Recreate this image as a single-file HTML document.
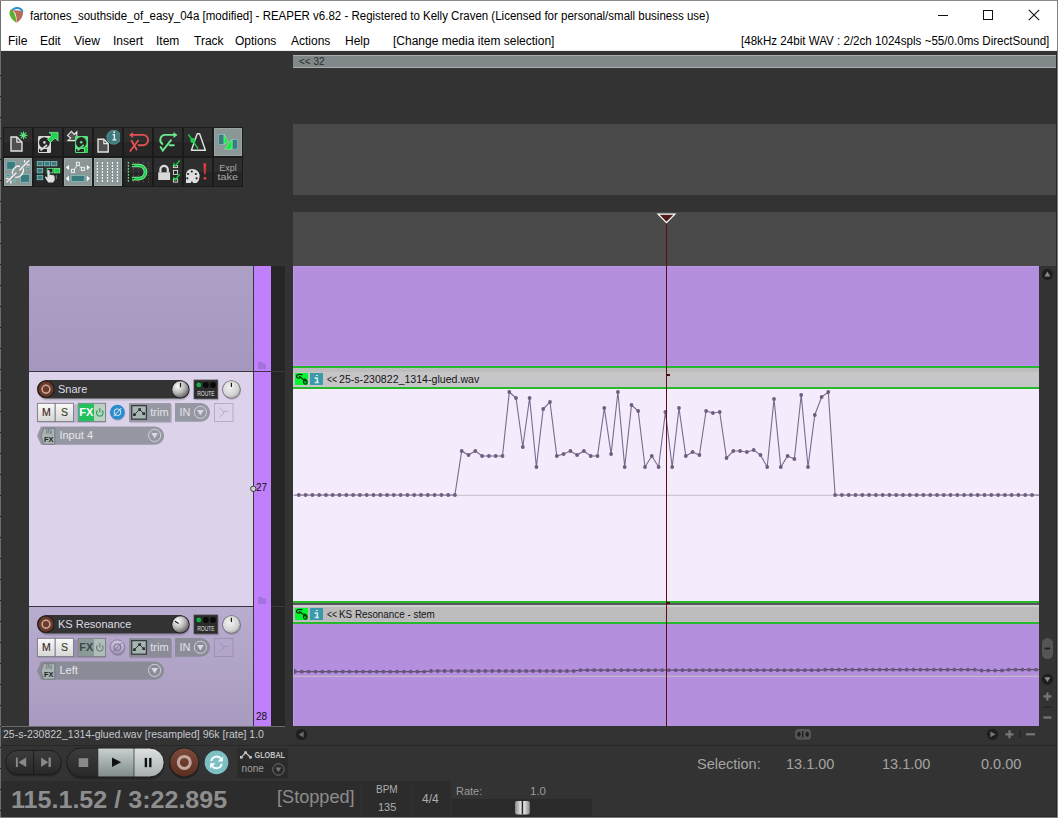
<!DOCTYPE html>
<html><head><meta charset="utf-8">
<style>
*{margin:0;padding:0;box-sizing:border-box}
html,body{width:1058px;height:818px;overflow:hidden;background:#333;font-family:"Liberation Sans",sans-serif}
.a{position:absolute}
#title{left:0;top:0;width:1058px;height:30px;background:#fff}
#menu{left:0;top:30px;width:1058px;height:21px;background:#fff;border-bottom:1px solid #ececec}
.t{position:absolute;white-space:nowrap;color:#000;font-size:12px;line-height:14px}
.mi{position:absolute;top:34px;font-size:12px;line-height:14px;color:#000;white-space:nowrap}
</style></head><body>
<!-- window borders -->
<div class="a" style="left:0;top:0;width:1px;height:818px;background:#707070;z-index:50"></div>
<div class="a" style="left:0;top:51px;width:1px;height:767px;background:repeating-linear-gradient(#6c6c6c 0,#6c6c6c 20px,#1e1e1e 20px,#1e1e1e 21px);background-position:0 4px;z-index:50"></div>
<div class="a" style="left:0;top:0;width:1058px;height:1px;background:#8a8a8a;z-index:50"></div>
<div class="a" style="left:1056px;top:51px;width:1px;height:766px;background:#2a2a2a;z-index:49"></div>
<div class="a" style="left:1057px;top:0;width:1px;height:818px;background:#808080;z-index:50"></div>
<div class="a" style="left:0;top:816px;width:1058px;height:1px;background:#2a2a2a;z-index:49"></div>
<div class="a" style="left:0;top:817px;width:1058px;height:1px;background:#808080;z-index:50"></div>

<div id="title" class="a"></div>
<div id="menu" class="a"></div>
<div class="t" style="left:30px;top:9px;transform:scaleX(0.958);transform-origin:0 0">fartones_southside_of_easy_04a [modified] - REAPER v6.82 - Registered to Kelly Craven (Licensed for personal/small business use)</div>
<svg class="a" style="left:8px;top:6px" width="18" height="18" viewBox="0 0 18 18">
<path d="M3.2 4.2 A7 7 0 0 1 15.6 5.5 L13.8 6.2 A5.4 5.4 0 0 0 4.6 5.2 Z" fill="#2a8fd0"/>
<path d="M1.6 5.8 Q2 3.6 3.6 3.6 Q6.5 5.5 8 12.5 Q8.4 15 7.6 16.6 Q3.5 14 1.6 9 Z" fill="#5cb030"/>
<path d="M4.8 4.4 Q9 3.6 14.8 5.6 Q15.6 10 12 14 Q10 16.2 8.4 16.8 Q9.2 12 7.5 7.5 Q6.5 5.2 4.8 4.4 Z" fill="#b86a58"/>
<path d="M2 4.6 L4 3.4 L4.8 4.4 L3 5.2 Z" fill="#c07a30"/>
</svg>
<!-- window controls -->
<div class="a" style="left:938px;top:15px;width:10px;height:1px;background:#111"></div>
<div class="a" style="left:983px;top:10px;width:10px;height:10px;border:1px solid #111"></div>
<svg class="a" style="left:1028px;top:9px" width="12" height="12" viewBox="0 0 12 12"><path d="M0.8 0.8 L11.2 11.2 M11.2 0.8 L0.8 11.2" stroke="#111" stroke-width="1.1"/></svg>
<div class="mi" style="left:8px">File</div>
<div class="mi" style="left:40px">Edit</div>
<div class="mi" style="left:74px">View</div>
<div class="mi" style="left:113px">Insert</div>
<div class="mi" style="left:156px">Item</div>
<div class="mi" style="left:194px">Track</div>
<div class="mi" style="left:235px">Options</div>
<div class="mi" style="left:291px">Actions</div>
<div class="mi" style="left:345px">Help</div>
<div class="mi" style="left:393px">[Change media item selection]</div>
<div class="mi" style="left:741px;transform:scaleX(0.966);transform-origin:0 0">[48kHz 24bit WAV : 2/2ch 1024spls ~55/0.0ms DirectSound]</div>

<!-- ruler -->
<div class="a" style="left:293px;top:55px;width:763px;height:13px;background:#808889;border-top:1px solid #a9adae;border-bottom:1px solid #a9adae"></div>
<div class="a" style="left:299px;top:56px;font-size:10px;line-height:11px;color:#2a2a2a">&lt;&lt; 32</div>
<!-- gray panels -->
<div class="a" style="left:293px;top:124px;width:763px;height:71px;background:#4a4a4a"></div>
<div class="a" style="left:293px;top:212px;width:763px;height:54px;background:#4a4a4a"></div>

<!-- toolbar -->
<svg class="a" style="left:3px;top:127px" width="240" height="60" viewBox="0 0 240 60">
<defs>
<linearGradient id="btn" x1="0" y1="0" x2="0" y2="1"><stop offset="0.5" stop-color="#2e2e2e"/><stop offset="0.5" stop-color="#262626"/></linearGradient>
</defs>
<rect x="0" y="0" width="240" height="60" fill="#1b1b1b"/>
<g fill="url(#btn)">
<rect x="1" y="1" width="28" height="28"/><rect x="31" y="1" width="28" height="28"/><rect x="61" y="1" width="28" height="28"/><rect x="91" y="1" width="28" height="28"/>
<rect x="121" y="1" width="28" height="28"/><rect x="151" y="1" width="28" height="28"/><rect x="181" y="1" width="28" height="28"/>
<rect x="31" y="31" width="28" height="28"/><rect x="121" y="31" width="28" height="28"/><rect x="151" y="31" width="28" height="28"/><rect x="181" y="31" width="28" height="28"/><rect x="211" y="31" width="28" height="28"/>
</g>
<g fill="#8b9797" stroke="#9aa6a6" stroke-width="1">
<rect x="211.5" y="1.5" width="27" height="27"/><rect x="1.5" y="31.5" width="27" height="27"/><rect x="61.5" y="31.5" width="27" height="27"/><rect x="91.5" y="31.5" width="27" height="27"/>
</g>
<!-- b1 new project -->
<path d="M8 10 H13.8 L19 15.2 V24 H8 Z" fill="#505050" stroke="#e2e2e2" stroke-width="1.4" stroke-linejoin="miter"/>
<path d="M13.8 10 V15.2 H19" fill="none" stroke="#e2e2e2" stroke-width="1.2"/>
<g stroke="#5ae07a" stroke-width="1.2"><path d="M20.5 4.6 V12.2 M16.7 8.4 H24.3 M17.8 5.7 L23.2 11.1 M23.2 5.7 L17.8 11.1"/></g>
<!-- b2 save -->
<rect x="35" y="9" width="13" height="17" rx="1.2" fill="#d9d9d9"/>
<circle cx="41.4" cy="15.6" r="5.4" fill="#252525"/>
<path d="M36 22 H44 V25 H36 Z" fill="#252525"/>
<circle cx="41.4" cy="15.4" r="1.3" fill="#d9d9d9"/>
<path d="M44 18 L37.5 23.5" stroke="#d9d9d9" stroke-width="1.7"/>
<path d="M46 5.4 H55 V14 L52 11 L47.5 15.5 L44.5 12.5 L49 8 Z" fill="#22d24e" stroke="#7fe89c" stroke-width="0.8"/>
<!-- b3 load -->
<path d="M64.6 8.4 L68.4 4.4 L71.2 7.4 L73.8 4.8 V13.6 H65 L67.6 11 Z" fill="#555" stroke="#e2e2e2" stroke-width="1.2" stroke-linejoin="miter"/>
<rect x="72" y="9" width="13" height="17" rx="1.2" fill="#5ee080"/>
<circle cx="78.2" cy="15.4" r="5.3" fill="#252525"/>
<path d="M73 22 H81 V25 H73 Z" fill="#252525"/>
<circle cx="78.2" cy="15.2" r="1.3" fill="#5ee080"/>
<path d="M80.8 17.8 L74.5 23.5" stroke="#5ee080" stroke-width="1.7"/>
<rect x="82" y="20" width="2.6" height="5.4" fill="#18d040"/>
<!-- b4 project info -->
<path d="M95 12.2 H100.8 L105.2 16.6 V25 H95 Z" fill="#505050" stroke="#e2e2e2" stroke-width="1.4"/>
<path d="M100.8 12.2 V16.6 H105.2" fill="none" stroke="#e2e2e2" stroke-width="1.2"/>
<clipPath id="ic4"><rect x="100" y="2.8" width="17" height="20"/></clipPath><circle cx="110.8" cy="10.2" r="7" fill="#3f7a7e" stroke="#5f9a9c" stroke-width="0.8" clip-path="url(#ic4)"/>
<path d="M109.6 7.6 H111.4 V12.8 M109.4 12.8 H113.4" stroke="#f2f2f2" stroke-width="1.3" fill="none"/>
<circle cx="111.2" cy="5.2" r="0.9" fill="#f2f2f2"/>
<!-- b5 red loop -->
<g stroke="#e05252" stroke-width="1.9" fill="none" stroke-linecap="round">
<path d="M8 7.9 H19.9 A5.2 5.2 0 0 1 19.9 18.3 H15.5" transform="translate(120 0)"/>
<path d="M127.3 24 L135 13.8 M128.6 13.8 L133.6 22.5"/>
</g>
<path d="M126 7.9 L130 4.9 V10.9 Z" fill="#e05252"/>
<!-- b6 green loop -->
<g stroke="#6ee890" stroke-width="1.9" fill="none" stroke-linecap="round">
<path d="M172 7.9 H162 A5 5 0 0 0 159.4 17"/>
<path d="M157.6 20 L159.8 23.6 L168 13.2 M166.6 18.2 H170.8"/>
</g>
<path d="M174.5 7.9 L170.5 4.9 V10.9 Z" fill="#6ee890"/>
<!-- b7 metronome -->
<path d="M194.2 6.8 H196.6 L202.4 23.3 H188.4 Z" fill="#2a2a2a" stroke="#e2e2e2" stroke-width="1.4" stroke-linejoin="round"/>
<path d="M185.4 7.4 L195 21.6" stroke="#20d04a" stroke-width="1.5"/>
<circle cx="189.9" cy="13.6" r="2.5" fill="#20d04a"/>
<!-- b8 highlighted -->
<rect x="215.5" y="7.4" width="5.6" height="9.9" fill="#3d7a7e" stroke="#7ec4c4" stroke-width="0.7"/>
<path d="M221.1 7.4 L225.4 15 L221.1 17.3 Z" fill="#10ee40" stroke="#90f0a8" stroke-width="0.6"/>
<rect x="229" y="12.5" width="5.5" height="9.6" fill="#3d7a7e" stroke="#7ec4c4" stroke-width="0.7"/>
<path d="M229 12.5 V22.1 H221.4 Z" fill="#10ee40" stroke="#90f0a8" stroke-width="0.6"/>
<!-- row 2 -->
<!-- c1 chain -->
<g fill="#3d7a7e" stroke="#7ec4c4" stroke-width="0.7">
<rect x="3.8" y="34.6" width="8.4" height="7.6"/><rect x="17.6" y="47.6" width="8.8" height="7.6"/>
<rect x="17.4" y="34.8" width="1.8" height="2.2"/><rect x="23.2" y="40.6" width="3.2" height="1.5"/>
<rect x="3.4" y="47.6" width="3.4" height="1.6"/><rect x="10.8" y="52.8" width="1.8" height="2.4"/>
</g>
<g stroke="#f2f2f2" fill="none" stroke-width="1.4" stroke-linecap="round">
<path d="M3.9 55.1 L13 45.9 M16.7 43 L25.9 33.7"/>
<path d="M9.4 46.6 Q9.2 42.6 12.6 40 Q15 38.5 16.6 39.4"/>
<path d="M20.4 42 Q20.8 46 17.6 48.8 Q15 50.8 12.8 50.3"/>
<path d="M21.6 33.6 V35 M24.2 37.9 H26.4 M3.3 51.6 H5 M7.9 54 V56"/>
</g>
<!-- c2 grid hand -->
<g fill="#3d7a7e" stroke="#7ec4c4" stroke-width="0.8">
<rect x="34.2" y="34.4" width="5.5" height="4.4"/><rect x="41.2" y="34.4" width="5.6" height="4.4"/><rect x="48.2" y="34.4" width="5.7" height="4.4"/>
<rect x="34.2" y="41.4" width="5.5" height="4.5"/><rect x="34.2" y="48.3" width="5.5" height="4.4"/>
</g>
<rect x="44.2" y="41.4" width="5.7" height="4.5" fill="#252525" stroke="#5ee080" stroke-width="0.9"/>
<rect x="51" y="41.4" width="5.7" height="4.5" fill="#18d040" stroke="#7ee89a" stroke-width="0.8"/>
<path d="M53.3 48 V52" stroke="#7ec4c4" stroke-width="0.6"/>
<path d="M45.2 55.5 L42 50.6 Q41.5 49.2 43 49.4 L44.4 50.8 V43.6 Q45.5 42.4 46.6 43.6 V48 Q48 47.3 49 48.2 Q50.6 47.8 51.4 49 L51.8 53 L50 55.5 Z" fill="#e0e0e0"/>
<!-- c3 envelope -->
<g fill="#fff">
<path d="M62.8 40.5 L66 37.9 V43 Z M86.9 40.5 L83.8 37.9 V43 Z M62.8 51.6 L66 48.7 V54.5 Z M86.9 51.6 L83.8 48.7 V54.5 Z"/>
</g>
<g stroke="#f0f0f0" fill="none" stroke-width="1">
<path d="M71.2 42.6 L74.2 38.4 M76.2 38.4 L78.6 41.2"/>
<rect x="68.4" y="42.4" width="3" height="3"/><rect x="73.4" y="35.3" width="3" height="3"/><rect x="78.4" y="40.4" width="3" height="3"/>
</g>
<rect x="68.2" y="48.4" width="13.6" height="6" fill="#3d7a7e" stroke="#7ec4c4" stroke-width="0.8"/>
<!-- c4 grid dots -->
<g stroke="#f4f4f4" stroke-width="1.2" stroke-dasharray="1.9 1.1">
<path d="M94.3 35 V55.2 M99.4 35 V55.2 M104.5 35 V55.2 M109.5 35 V55.2 M114.5 35 V55.2"/>
</g>
<!-- c5 magnet -->
<g stroke="#5ee07a" stroke-width="1.2" stroke-dasharray="1.8 1.2"><path d="M125.4 35 V55.5"/></g>
<g stroke="#555" stroke-width="1" stroke-dasharray="1.2 2"><path d="M130.5 35 V55.5 M135.4 35 V55.5 M140.4 35 V55.5 M145.5 35 V55.5"/></g>
<path d="M129 38.5 H136 A6.55 6.55 0 0 1 136 51.6 H129" fill="none" stroke="#8ef0a6" stroke-width="3.6"/>
<path d="M129 38.5 H136 A6.55 6.55 0 0 1 136 51.6 H129" fill="none" stroke="#20d04a" stroke-width="2.2"/>
<path d="M129.4 38.5 H131.2 M129.4 51.6 H131.2" stroke="#1a1a1a" stroke-width="1"/>
<!-- c6 lock -->
<path d="M157.4 45.5 V42.6 A3.7 3.7 0 0 1 164.8 42.6 V45.5" fill="none" stroke="#dcdcdc" stroke-width="2.2"/>
<rect x="155.2" y="45.3" width="11.9" height="7.7" fill="#d8d8d8"/>
<g fill="none" stroke="#e0e0e0" stroke-width="0.9"><rect x="170.4" y="38.6" width="4.2" height="2"/><rect x="170.4" y="43.4" width="4.2" height="4"/><rect x="170.4" y="51.9" width="4.2" height="3.2"/></g>
<rect x="171.6" y="44.6" width="1.8" height="1.6" fill="#222"/>
<path d="M170.5 36.2 L172.2 39.1 L176.7 33.4 M170.5 50.1 L172.2 53 L176.7 47.3" stroke="#18d040" stroke-width="1.4" fill="none"/>
<!-- c7 palette -->
<path d="M183 56 V47 Q184 42 189.4 42 Q195.5 42.3 196.6 48 Q197 53 193.5 56 Z" fill="#dedede"/>
<g fill="#222"><circle cx="188.8" cy="44.5" r="1.1"/><circle cx="185.1" cy="47" r="1.1"/><circle cx="192.8" cy="47" r="1.1"/><circle cx="193.6" cy="51.3" r="1.1"/><circle cx="184.3" cy="51.3" r="1.1"/><rect x="188" y="54.6" width="1.8" height="1.6"/></g>
<path d="M200.3 36.2 H203.3 L202.5 47.2 H201.1 Z" fill="#e03a3a"/>
<circle cx="201.9" cy="51.3" r="1.5" fill="#e03a3a"/>
<!-- c8 text -->
<text x="225" y="44" font-family="Liberation Sans" font-size="9" fill="#a8a8a8" text-anchor="middle">Expl</text>
<text x="214.6" y="52.7" font-family="Liberation Sans" font-size="9" fill="#a8a8a8" textLength="20.4" lengthAdjust="spacingAndGlyphs">take</text>
</svg>

<!-- TCP -->
<div class="a" style="left:29px;top:266px;width:224px;height:105px;background:linear-gradient(#ad9fc6,#a697be)"></div>
<div class="a" style="left:29px;top:371px;width:256px;height:1px;background:#3a3440"></div>
<div class="a" style="left:29px;top:372px;width:224px;height:234px;background:#dcd2ea"></div>
<div class="a" style="left:29px;top:606px;width:256px;height:1px;background:#3a3440"></div>
<div class="a" style="left:29px;top:607px;width:224px;height:119px;background:linear-gradient(#b8accf,#a89bbf)"></div>
<div class="a" style="left:253px;top:266px;width:1px;height:460px;background:#3a3440"></div>
<div class="a" style="left:254px;top:266px;width:17px;height:460px;background:#c080fc"></div>
<div class="a" style="left:271px;top:266px;width:14px;height:460px;background:#262626"></div>
<div class="a" style="left:0px;top:726px;width:285px;height:1px;background:#6a6a6a"></div>

<!-- TCPCTL -->
<svg class="a" style="left:29px;top:372px" width="224" height="80" viewBox="0 0 224 80">
<defs>
<radialGradient id="kn0" cx="0.35" cy="0.3" r="0.75"><stop offset="0" stop-color="#ffffff"/><stop offset="0.55" stop-color="#b8b8b8"/><stop offset="1" stop-color="#5a5a5a"/></radialGradient>
<linearGradient id="ms0" x1="0" y1="0" x2="0" y2="1"><stop offset="0" stop-color="#fafafa"/><stop offset="1" stop-color="#d6d6d6"/></linearGradient>
<linearGradient id="ph0" x1="0" y1="0" x2="0" y2="1"><stop offset="0" stop-color="#d2cae2"/><stop offset="1" stop-color="#9a92b2"/></linearGradient>
<radialGradient id="pk0" cx="0.4" cy="0.35" r="0.8"><stop offset="0" stop-color="#f2f2f2"/><stop offset="0.6" stop-color="#d4d4d4"/><stop offset="1" stop-color="#9a9a9a"/></radialGradient>
</defs>
<g fill="#000" opacity="0.13"><rect x="9" y="10" width="152" height="18.4" rx="9.2"/><rect x="9" y="32.5" width="65" height="18.3"/><rect x="49.5" y="32.5" width="27.3" height="18.3"/><circle cx="203" cy="18.7" r="9.2"/><rect x="166" y="9.5" width="23.7" height="18.8"/><circle cx="88.8" cy="41.4" r="7.5"/><rect x="101" y="32.3" width="42" height="18.8"/></g>
<rect x="8" y="8" width="152" height="18.4" rx="9.2" fill="#333"/>
<circle cx="17" cy="17.2" r="8.6" fill="#1c1c1c"/><circle cx="17" cy="17.2" r="7.6" fill="#6c3a2a"/><circle cx="17" cy="17.2" r="3.9" fill="none" stroke="#c9a99e" stroke-width="1.6"/>
<text x="29" y="21.2" font-family="Liberation Sans" font-size="11" fill="#dcdce6">Snare</text>
<circle cx="151.5" cy="17.5" r="9.1" fill="#1e1e1e"/><circle cx="151.5" cy="17.5" r="8.3" fill="url(#kn0)"/><path d="M151.5 11 V15.3" stroke="#1a1a1a" stroke-width="1.2" transform="rotate(0 151.5 17.5)"/>
<rect x="165" y="8" width="23.7" height="18.8" fill="#2c2c2c" stroke="#4a4a4a" stroke-width="0.8"/>
<circle cx="169.8" cy="12.9" r="2.9" fill="#20a850" stroke="#111" stroke-width="0.6"/><circle cx="176.9" cy="12.9" r="2.9" fill="#0a0a0a"/><circle cx="184" cy="12.9" r="2.9" fill="#0a0a0a"/>
<text x="176.9" y="24.2" font-family="Liberation Sans" font-size="7" fill="#e0e0e0" text-anchor="middle" textLength="17.5" lengthAdjust="spacingAndGlyphs">ROUTE</text>
<circle cx="202.4" cy="17.5" r="9.3" fill="#6a6a70"/><circle cx="202.4" cy="17.5" r="8.5" fill="url(#pk0)"/><path d="M202.4 10.8 V15" stroke="#1a1a1a" stroke-width="1.2"/>
<rect x="8.4" y="31.3" width="17.8" height="18.3" fill="url(#ms0)" stroke="#7a7a82" stroke-width="0.9"/><rect x="26.2" y="31.3" width="18.3" height="18.3" fill="url(#ms0)" stroke="#7a7a82" stroke-width="0.9"/>
<text x="17.4" y="44.4" font-family="Liberation Sans" font-size="10.5" fill="#3e2620" stroke="#3e2620" stroke-width="0.15" text-anchor="middle">M</text><text x="35.4" y="44.4" font-family="Liberation Sans" font-size="10.5" fill="#3a4424" stroke="#3a4424" stroke-width="0.15" text-anchor="middle">S</text>
<rect x="49.3" y="31.3" width="27.3" height="18.3" fill="#b9d2c2" stroke="#7a7a82" stroke-width="0.9"/><rect x="49.7" y="31.7" width="15.3" height="17.5" fill="#22c05e"/>
<text x="57.2" y="44.4" font-family="Liberation Sans" font-size="11" font-weight="bold" fill="#ffffff" text-anchor="middle">FX</text>
<path d="M68.6 38.3 A3.3 3.3 0 1 0 73 38.3" fill="none" stroke="#1ea050" stroke-width="1.1"/><path d="M70.8 36 V40.4" stroke="#1ea050" stroke-width="1.1"/>
<circle cx="88.4" cy="40.2" r="7.5" fill="#2a8ccc"/><circle cx="88.4" cy="40.2" r="3.4" fill="none" stroke="#f0f6fa" stroke-width="0.9"/><path d="M84.4 44.4 L92.4 36" stroke="#f0f6fa" stroke-width="0.9"/>
<rect x="100" y="31.1" width="41.8" height="18.8" fill="#9598a2"/>
<rect x="102.7" y="33.6" width="14.7" height="13.6" fill="#a6b6b2" stroke="#3c3c40" stroke-width="1.3"/>
<path d="M105.4 42.6 L110.6 37.5 L114.6 41.6" fill="none" stroke="#303034" stroke-width="0.9"/><rect x="104.1" y="41.3" width="2.7" height="2.7" fill="#303034"/><rect x="109.3" y="36.2" width="2.7" height="2.7" fill="#303034"/><rect x="113.3" y="40.3" width="2.7" height="2.7" fill="#303034"/>
<text x="121.3" y="44" font-family="Liberation Sans" font-size="11" fill="#e2e2e8">trim</text>
<path d="M146 31 H171.6 A9.4 9.4 0 0 1 171.6 49.8 H146 Z" fill="#9598a2"/>
<text x="150.4" y="44" font-family="Liberation Sans" font-size="11" fill="#e2e2e8">IN</text>
<circle cx="171.4" cy="40.3" r="6.1" fill="none" stroke="#d6d8de" stroke-width="0.9"/><path d="M168 38 H174.8 L171.4 43.4 Z" fill="#d6d8de"/>
<rect x="185.5" y="31.5" width="18.5" height="18" fill="none" stroke="#b2aac4" stroke-width="0.9"/>
<path d="M190.2 35.6 L194.6 39.4 H199.4 M194.6 39.4 V41.6 L190.2 45.2" fill="none" stroke="#b2aac4" stroke-width="0.9"/>
<path d="M12 54.5 H126 A9.15 9.15 0 0 1 126 72.8 H12 L8 63.65 Z" fill="#9598a2"/>
<path d="M14.6 56.3 H25.8 V72.2 H14.6 L12 64.2 Z" fill="#a9b4b2" stroke="#6e6e7a" stroke-width="0.8"/>
<text x="19.8" y="62.4" font-family="Liberation Sans" font-size="6.5" fill="#646a70" text-anchor="middle">IN</text>
<text x="19.8" y="70.2" font-family="Liberation Sans" font-size="7.5" font-weight="bold" fill="#1e2226" text-anchor="middle">FX</text>
<text x="30.4" y="67.2" font-family="Liberation Sans" font-size="11" fill="#e6e6ea">Input 4</text>
<circle cx="125.6" cy="63.4" r="6.1" fill="none" stroke="#d6d8de" stroke-width="0.9"/><path d="M122.2 61.1 H129 L125.6 66.5 Z" fill="#d6d8de"/>
</svg>
<svg class="a" style="left:29px;top:607px" width="224" height="80" viewBox="0 0 224 80">
<defs>
<radialGradient id="kn235" cx="0.35" cy="0.3" r="0.75"><stop offset="0" stop-color="#ffffff"/><stop offset="0.55" stop-color="#b8b8b8"/><stop offset="1" stop-color="#5a5a5a"/></radialGradient>
<linearGradient id="ms235" x1="0" y1="0" x2="0" y2="1"><stop offset="0" stop-color="#fafafa"/><stop offset="1" stop-color="#d6d6d6"/></linearGradient>
<linearGradient id="ph235" x1="0" y1="0" x2="0" y2="1"><stop offset="0" stop-color="#d2cae2"/><stop offset="1" stop-color="#9a92b2"/></linearGradient>
<radialGradient id="pk235" cx="0.4" cy="0.35" r="0.8"><stop offset="0" stop-color="#f2f2f2"/><stop offset="0.6" stop-color="#d4d4d4"/><stop offset="1" stop-color="#9a9a9a"/></radialGradient>
</defs>
<g fill="#000" opacity="0.13"><rect x="9" y="10" width="152" height="18.4" rx="9.2"/><rect x="9" y="32.5" width="65" height="18.3"/><rect x="49.5" y="32.5" width="27.3" height="18.3"/><circle cx="203" cy="18.7" r="9.2"/><rect x="166" y="9.5" width="23.7" height="18.8"/><circle cx="88.8" cy="41.4" r="7.5"/><rect x="101" y="32.3" width="42" height="18.8"/></g>
<rect x="8" y="8" width="152" height="18.4" rx="9.2" fill="#333"/>
<circle cx="17" cy="17.2" r="8.6" fill="#1c1c1c"/><circle cx="17" cy="17.2" r="7.6" fill="#6c3a2a"/><circle cx="17" cy="17.2" r="3.9" fill="none" stroke="#c9a99e" stroke-width="1.6"/>
<text x="29" y="21.2" font-family="Liberation Sans" font-size="11" fill="#dcdce6">KS Resonance</text>
<circle cx="151.5" cy="17.5" r="9.1" fill="#1e1e1e"/><circle cx="151.5" cy="17.5" r="8.3" fill="url(#kn235)"/><path d="M151.5 11 V15.3" stroke="#1a1a1a" stroke-width="1.2" transform="rotate(-60 151.5 17.5)"/>
<rect x="165" y="8" width="23.7" height="18.8" fill="#2c2c2c" stroke="#4a4a4a" stroke-width="0.8"/>
<circle cx="169.8" cy="12.9" r="2.9" fill="#20a850" stroke="#111" stroke-width="0.6"/><circle cx="176.9" cy="12.9" r="2.9" fill="#0a0a0a"/><circle cx="184" cy="12.9" r="2.9" fill="#0a0a0a"/>
<text x="176.9" y="24.2" font-family="Liberation Sans" font-size="7" fill="#e0e0e0" text-anchor="middle" textLength="17.5" lengthAdjust="spacingAndGlyphs">ROUTE</text>
<circle cx="202.4" cy="17.5" r="9.3" fill="#6a6a70"/><circle cx="202.4" cy="17.5" r="8.5" fill="url(#pk235)"/><path d="M202.4 10.8 V15" stroke="#1a1a1a" stroke-width="1.2"/>
<rect x="8.4" y="31.3" width="17.8" height="18.3" fill="url(#ms235)" stroke="#7a7a82" stroke-width="0.9"/><rect x="26.2" y="31.3" width="18.3" height="18.3" fill="url(#ms235)" stroke="#7a7a82" stroke-width="0.9"/>
<text x="17.4" y="44.4" font-family="Liberation Sans" font-size="10.5" fill="#3e2620" stroke="#3e2620" stroke-width="0.15" text-anchor="middle">M</text><text x="35.4" y="44.4" font-family="Liberation Sans" font-size="10.5" fill="#3a4424" stroke="#3a4424" stroke-width="0.15" text-anchor="middle">S</text>
<rect x="49.3" y="31.3" width="27.3" height="18.3" fill="#b0bdb9" stroke="#7a7a82" stroke-width="0.9"/><rect x="49.7" y="31.7" width="15.3" height="17.5" fill="#8a9a98"/>
<text x="57.2" y="44.4" font-family="Liberation Sans" font-size="11" font-weight="bold" fill="#3c4848" text-anchor="middle">FX</text>
<path d="M68.6 38.3 A3.3 3.3 0 1 0 73 38.3" fill="none" stroke="#6a7a78" stroke-width="1.1"/><path d="M70.8 36 V40.4" stroke="#6a7a78" stroke-width="1.1"/>
<circle cx="88.4" cy="40.2" r="7.3" fill="url(#ph235)" stroke="#7a7290" stroke-width="0.8"/><circle cx="88.4" cy="40.2" r="3.4" fill="none" stroke="#7a7290" stroke-width="1"/><path d="M84.4 44.4 L92.4 36" stroke="#7a7290" stroke-width="1"/>
<rect x="100" y="31.1" width="41.8" height="18.8" fill="#8a8c98"/>
<rect x="102.7" y="33.6" width="14.7" height="13.6" fill="#a6b6b2" stroke="#3c3c40" stroke-width="1.3"/>
<path d="M105.4 42.6 L110.6 37.5 L114.6 41.6" fill="none" stroke="#303034" stroke-width="0.9"/><rect x="104.1" y="41.3" width="2.7" height="2.7" fill="#303034"/><rect x="109.3" y="36.2" width="2.7" height="2.7" fill="#303034"/><rect x="113.3" y="40.3" width="2.7" height="2.7" fill="#303034"/>
<text x="121.3" y="44" font-family="Liberation Sans" font-size="11" fill="#e2e2e8">trim</text>
<path d="M146 31 H171.6 A9.4 9.4 0 0 1 171.6 49.8 H146 Z" fill="#8a8c98"/>
<text x="150.4" y="44" font-family="Liberation Sans" font-size="11" fill="#e2e2e8">IN</text>
<circle cx="171.4" cy="40.3" r="6.1" fill="none" stroke="#d6d8de" stroke-width="0.9"/><path d="M168 38 H174.8 L171.4 43.4 Z" fill="#d6d8de"/>
<rect x="185.5" y="31.5" width="18.5" height="18" fill="none" stroke="#9a90b4" stroke-width="0.9"/>
<path d="M190.2 35.6 L194.6 39.4 H199.4 M194.6 39.4 V41.6 L190.2 45.2" fill="none" stroke="#9a90b4" stroke-width="0.9"/>
<path d="M12 54.5 H126 A9.15 9.15 0 0 1 126 72.8 H12 L8 63.65 Z" fill="#8a8c98"/>
<path d="M14.6 56.3 H25.8 V72.2 H14.6 L12 64.2 Z" fill="#a9b4b2" stroke="#6e6e7a" stroke-width="0.8"/>
<text x="19.8" y="62.4" font-family="Liberation Sans" font-size="6.5" fill="#646a70" text-anchor="middle">IN</text>
<text x="19.8" y="70.2" font-family="Liberation Sans" font-size="7.5" font-weight="bold" fill="#1e2226" text-anchor="middle">FX</text>
<text x="30.4" y="67.2" font-family="Liberation Sans" font-size="11" fill="#e6e6ea">Left</text>
<circle cx="125.6" cy="63.4" r="6.1" fill="none" stroke="#d6d8de" stroke-width="0.9"/><path d="M122.2 61.1 H129 L125.6 66.5 Z" fill="#d6d8de"/>
</svg>
<!-- /TCPCTL -->
<!-- arrange -->
<div class="a" style="left:293px;top:266px;width:746px;height:460px;background:#b38fdd;border-top:1px solid #bf97ea;border-left:1px solid #bf97ea"></div>
<div class="a" style="left:293px;top:365px;width:746px;height:1px;background:#bf8ff0"></div>
<div class="a" style="left:293px;top:366px;width:746px;height:2px;background:#26b92c"></div>
<div class="a" style="left:293px;top:368px;width:746px;height:4px;background:#bdbdbd"></div>
<div class="a" style="left:293px;top:372px;width:746px;height:15px;background:#c6c6c8"></div>
<div class="a" style="left:293px;top:387px;width:746px;height:2px;background:#26b92c"></div>
<div class="a" style="left:293px;top:389px;width:746px;height:212px;background:#f4ecfc"></div>
<div class="a" style="left:293px;top:601px;width:746px;height:2px;background:#26b92c"></div>
<div class="a" style="left:293px;top:603px;width:746px;height:2px;background:#5a5560"></div>
<div class="a" style="left:293px;top:605px;width:746px;height:2px;background:#cfcfcf"></div>
<div class="a" style="left:293px;top:607px;width:746px;height:14px;background:#bcbcbc"></div>
<div class="a" style="left:293px;top:621px;width:746px;height:1px;background:#c6bcc6"></div>
<div class="a" style="left:293px;top:622px;width:746px;height:2px;background:#26b92c"></div>
<div class="a" style="left:1039px;top:266px;width:17px;height:460px;background:#333"></div>

<!-- ARR -->
<svg class="a" style="left:293px;top:389px" width="746" height="212" viewBox="0 0 746 212">
<path d="M0 106.3 H746" stroke="#c4bcc8" stroke-width="1"/>
<polyline points="1.3,106 5.8,106.0 12.6,106.0 19.4,106.0 26.2,106.0 33.0,106.0 39.7,106.0 46.5,106.0 53.3,106.0 60.1,106.0 66.9,106.0 73.7,106.0 80.5,106.0 87.3,106.0 94.1,106.0 100.8,106.0 107.6,106.0 114.4,106.0 121.2,106.0 128.0,106.0 134.8,106.0 141.6,106.0 148.4,106.0 155.2,106.0 161.9,106.0 168.7,62.0 175.5,66.0 182.3,62.0 189.1,67.0 195.9,67.0 202.7,67.0 209.5,67.0 216.3,3.0 223.0,9.0 229.8,58.0 236.6,9.0 243.4,78.0 250.2,20.0 257.0,13.0 263.8,67.0 270.6,65.0 277.4,62.0 284.1,66.0 290.9,62.0 297.7,67.0 304.5,67.0 311.3,19.0 318.1,65.0 324.9,3.0 331.7,78.0 338.5,16.0 345.2,22.0 352.0,78.0 358.8,67.0 365.6,78.0 372.4,23.0 379.2,78.0 386.0,19.0 392.8,67.0 399.6,63.0 406.4,66.0 413.1,22.0 419.9,24.0 426.7,23.0 433.5,69.0 440.3,62.0 447.1,62.0 453.9,63.0 460.7,61.0 467.5,66.0 474.2,78.0 481.0,10.0 487.8,78.0 494.6,67.0 501.4,70.0 508.2,6.0 515.0,78.0 521.8,26.0 528.6,8.0 535.3,3.0 542.1,106.0 548.9,106.0 555.7,106.0 562.5,106.0 569.3,106.0 576.1,106.0 582.9,106.0 589.7,106.0 596.4,106.0 603.2,106.0 610.0,106.0 616.8,106.0 623.6,106.0 630.4,106.0 637.2,106.0 644.0,106.0 650.8,106.0 657.5,106.0 664.3,106.0 671.1,106.0 677.9,106.0 684.7,106.0 691.5,106.0 698.3,106.0 705.1,106.0 711.9,106.0 718.6,106.0 725.4,106.0 732.2,106.0 739.0,106.0 746,106" fill="none" stroke="#7a6a8c" stroke-width="1.1"/>
<g fill="#6e5e80"><circle cx="5.8" cy="106.0" r="1.9"/><circle cx="12.6" cy="106.0" r="1.9"/><circle cx="19.4" cy="106.0" r="1.9"/><circle cx="26.2" cy="106.0" r="1.9"/><circle cx="33.0" cy="106.0" r="1.9"/><circle cx="39.7" cy="106.0" r="1.9"/><circle cx="46.5" cy="106.0" r="1.9"/><circle cx="53.3" cy="106.0" r="1.9"/><circle cx="60.1" cy="106.0" r="1.9"/><circle cx="66.9" cy="106.0" r="1.9"/><circle cx="73.7" cy="106.0" r="1.9"/><circle cx="80.5" cy="106.0" r="1.9"/><circle cx="87.3" cy="106.0" r="1.9"/><circle cx="94.1" cy="106.0" r="1.9"/><circle cx="100.8" cy="106.0" r="1.9"/><circle cx="107.6" cy="106.0" r="1.9"/><circle cx="114.4" cy="106.0" r="1.9"/><circle cx="121.2" cy="106.0" r="1.9"/><circle cx="128.0" cy="106.0" r="1.9"/><circle cx="134.8" cy="106.0" r="1.9"/><circle cx="141.6" cy="106.0" r="1.9"/><circle cx="148.4" cy="106.0" r="1.9"/><circle cx="155.2" cy="106.0" r="1.9"/><circle cx="161.9" cy="106.0" r="1.9"/><circle cx="168.7" cy="62.0" r="1.9"/><circle cx="175.5" cy="66.0" r="1.9"/><circle cx="182.3" cy="62.0" r="1.9"/><circle cx="189.1" cy="67.0" r="1.9"/><circle cx="195.9" cy="67.0" r="1.9"/><circle cx="202.7" cy="67.0" r="1.9"/><circle cx="209.5" cy="67.0" r="1.9"/><circle cx="216.3" cy="3.0" r="1.9"/><circle cx="223.0" cy="9.0" r="1.9"/><circle cx="229.8" cy="58.0" r="1.9"/><circle cx="236.6" cy="9.0" r="1.9"/><circle cx="243.4" cy="78.0" r="1.9"/><circle cx="250.2" cy="20.0" r="1.9"/><circle cx="257.0" cy="13.0" r="1.9"/><circle cx="263.8" cy="67.0" r="1.9"/><circle cx="270.6" cy="65.0" r="1.9"/><circle cx="277.4" cy="62.0" r="1.9"/><circle cx="284.1" cy="66.0" r="1.9"/><circle cx="290.9" cy="62.0" r="1.9"/><circle cx="297.7" cy="67.0" r="1.9"/><circle cx="304.5" cy="67.0" r="1.9"/><circle cx="311.3" cy="19.0" r="1.9"/><circle cx="318.1" cy="65.0" r="1.9"/><circle cx="324.9" cy="3.0" r="1.9"/><circle cx="331.7" cy="78.0" r="1.9"/><circle cx="338.5" cy="16.0" r="1.9"/><circle cx="345.2" cy="22.0" r="1.9"/><circle cx="352.0" cy="78.0" r="1.9"/><circle cx="358.8" cy="67.0" r="1.9"/><circle cx="365.6" cy="78.0" r="1.9"/><circle cx="372.4" cy="23.0" r="1.9"/><circle cx="379.2" cy="78.0" r="1.9"/><circle cx="386.0" cy="19.0" r="1.9"/><circle cx="392.8" cy="67.0" r="1.9"/><circle cx="399.6" cy="63.0" r="1.9"/><circle cx="406.4" cy="66.0" r="1.9"/><circle cx="413.1" cy="22.0" r="1.9"/><circle cx="419.9" cy="24.0" r="1.9"/><circle cx="426.7" cy="23.0" r="1.9"/><circle cx="433.5" cy="69.0" r="1.9"/><circle cx="440.3" cy="62.0" r="1.9"/><circle cx="447.1" cy="62.0" r="1.9"/><circle cx="453.9" cy="63.0" r="1.9"/><circle cx="460.7" cy="61.0" r="1.9"/><circle cx="467.5" cy="66.0" r="1.9"/><circle cx="474.2" cy="78.0" r="1.9"/><circle cx="481.0" cy="10.0" r="1.9"/><circle cx="487.8" cy="78.0" r="1.9"/><circle cx="494.6" cy="67.0" r="1.9"/><circle cx="501.4" cy="70.0" r="1.9"/><circle cx="508.2" cy="6.0" r="1.9"/><circle cx="515.0" cy="78.0" r="1.9"/><circle cx="521.8" cy="26.0" r="1.9"/><circle cx="528.6" cy="8.0" r="1.9"/><circle cx="535.3" cy="3.0" r="1.9"/><circle cx="542.1" cy="106.0" r="1.9"/><circle cx="548.9" cy="106.0" r="1.9"/><circle cx="555.7" cy="106.0" r="1.9"/><circle cx="562.5" cy="106.0" r="1.9"/><circle cx="569.3" cy="106.0" r="1.9"/><circle cx="576.1" cy="106.0" r="1.9"/><circle cx="582.9" cy="106.0" r="1.9"/><circle cx="589.7" cy="106.0" r="1.9"/><circle cx="596.4" cy="106.0" r="1.9"/><circle cx="603.2" cy="106.0" r="1.9"/><circle cx="610.0" cy="106.0" r="1.9"/><circle cx="616.8" cy="106.0" r="1.9"/><circle cx="623.6" cy="106.0" r="1.9"/><circle cx="630.4" cy="106.0" r="1.9"/><circle cx="637.2" cy="106.0" r="1.9"/><circle cx="644.0" cy="106.0" r="1.9"/><circle cx="650.8" cy="106.0" r="1.9"/><circle cx="657.5" cy="106.0" r="1.9"/><circle cx="664.3" cy="106.0" r="1.9"/><circle cx="671.1" cy="106.0" r="1.9"/><circle cx="677.9" cy="106.0" r="1.9"/><circle cx="684.7" cy="106.0" r="1.9"/><circle cx="691.5" cy="106.0" r="1.9"/><circle cx="698.3" cy="106.0" r="1.9"/><circle cx="705.1" cy="106.0" r="1.9"/><circle cx="711.9" cy="106.0" r="1.9"/><circle cx="718.6" cy="106.0" r="1.9"/><circle cx="725.4" cy="106.0" r="1.9"/><circle cx="732.2" cy="106.0" r="1.9"/><circle cx="739.0" cy="106.0" r="1.9"/></g>
</svg>
<svg class="a" style="left:293px;top:624px" width="746" height="102" viewBox="0 0 746 102">
<path d="M0 52.3 H746" stroke="#c8c0c4" stroke-width="1"/>
<polyline points="2.1,47.7 8.9,47.7 15.7,47.7 22.5,47.7 29.3,47.7 36.1,47.7 42.9,47.7 49.7,47.7 56.5,47.7 63.3,47.7 70.1,47.7 76.9,47.7 83.7,47.7 90.4,47.7 97.2,47.7 104.0,47.7 110.8,47.7 117.6,47.7 124.4,47.7 131.2,47.7 138.0,47.0 144.8,47.0 151.6,47.0 158.4,47.0 165.2,47.0 172.0,47.0 178.8,47.0 185.6,47.0 192.4,47.0 199.2,47.0 206.0,47.0 212.8,47.0 219.6,47.0 226.4,47.0 233.2,47.0 240.0,47.0 246.8,47.0 253.6,47.0 260.3,47.0 267.1,47.0 273.9,47.0 280.7,47.0 287.5,46.2 294.3,46.2 301.1,46.2 307.9,46.2 314.7,46.2 321.5,46.2 328.3,46.2 335.1,46.2 341.9,46.2 348.7,46.2 355.5,46.2 362.3,46.2 369.1,46.2 375.9,46.2 382.7,46.2 389.5,46.2 396.3,46.2 403.1,46.2 409.9,46.2 416.7,46.2 423.5,46.2 430.2,46.2 437.0,46.2 443.8,46.2 450.6,46.2 457.4,46.2 464.2,46.2 471.0,46.2 477.8,46.2 484.6,46.2 491.4,46.2 498.2,46.2 505.0,46.2 511.8,46.2 518.6,46.2 525.4,46.2 532.2,45.7 539.0,45.7 545.8,45.7 552.6,45.7 559.4,45.7 566.2,45.7 573.0,45.7 579.8,45.7 586.6,45.7 593.4,45.7 600.1,45.7 606.9,45.7 613.7,45.7 620.5,45.7 627.3,45.7 634.1,45.7 640.9,45.7 647.7,45.7 654.5,45.7 661.3,45.7 668.1,45.7 674.9,45.7 681.7,45.7 688.5,46.5 695.3,46.5 702.1,46.5 708.9,46.5 715.7,45.7 722.5,45.7 729.3,45.7 736.1,45.7 742.9,45.7 746,45.7" fill="none" stroke="#5e4e70" stroke-width="1.2"/>
<g fill="#66567a"><circle cx="8.9" cy="47.7" r="1.9"/><circle cx="15.7" cy="47.7" r="1.9"/><circle cx="22.5" cy="47.7" r="1.9"/><circle cx="29.3" cy="47.7" r="1.9"/><circle cx="36.1" cy="47.7" r="1.9"/><circle cx="42.9" cy="47.7" r="1.9"/><circle cx="49.7" cy="47.7" r="1.9"/><circle cx="56.5" cy="47.7" r="1.9"/><circle cx="63.3" cy="47.7" r="1.9"/><circle cx="70.1" cy="47.7" r="1.9"/><circle cx="76.9" cy="47.7" r="1.9"/><circle cx="83.7" cy="47.7" r="1.9"/><circle cx="90.4" cy="47.7" r="1.9"/><circle cx="97.2" cy="47.7" r="1.9"/><circle cx="104.0" cy="47.7" r="1.9"/><circle cx="110.8" cy="47.7" r="1.9"/><circle cx="117.6" cy="47.7" r="1.9"/><circle cx="124.4" cy="47.7" r="1.9"/><circle cx="131.2" cy="47.7" r="1.9"/><circle cx="138.0" cy="47.0" r="1.9"/><circle cx="144.8" cy="47.0" r="1.9"/><circle cx="151.6" cy="47.0" r="1.9"/><circle cx="158.4" cy="47.0" r="1.9"/><circle cx="165.2" cy="47.0" r="1.9"/><circle cx="172.0" cy="47.0" r="1.9"/><circle cx="178.8" cy="47.0" r="1.9"/><circle cx="185.6" cy="47.0" r="1.9"/><circle cx="192.4" cy="47.0" r="1.9"/><circle cx="199.2" cy="47.0" r="1.9"/><circle cx="206.0" cy="47.0" r="1.9"/><circle cx="212.8" cy="47.0" r="1.9"/><circle cx="219.6" cy="47.0" r="1.9"/><circle cx="226.4" cy="47.0" r="1.9"/><circle cx="233.2" cy="47.0" r="1.9"/><circle cx="240.0" cy="47.0" r="1.9"/><circle cx="246.8" cy="47.0" r="1.9"/><circle cx="253.6" cy="47.0" r="1.9"/><circle cx="260.3" cy="47.0" r="1.9"/><circle cx="267.1" cy="47.0" r="1.9"/><circle cx="273.9" cy="47.0" r="1.9"/><circle cx="280.7" cy="47.0" r="1.9"/><circle cx="287.5" cy="46.2" r="1.9"/><circle cx="294.3" cy="46.2" r="1.9"/><circle cx="301.1" cy="46.2" r="1.9"/><circle cx="307.9" cy="46.2" r="1.9"/><circle cx="314.7" cy="46.2" r="1.9"/><circle cx="321.5" cy="46.2" r="1.9"/><circle cx="328.3" cy="46.2" r="1.9"/><circle cx="335.1" cy="46.2" r="1.9"/><circle cx="341.9" cy="46.2" r="1.9"/><circle cx="348.7" cy="46.2" r="1.9"/><circle cx="355.5" cy="46.2" r="1.9"/><circle cx="362.3" cy="46.2" r="1.9"/><circle cx="369.1" cy="46.2" r="1.9"/><circle cx="375.9" cy="46.2" r="1.9"/><circle cx="382.7" cy="46.2" r="1.9"/><circle cx="389.5" cy="46.2" r="1.9"/><circle cx="396.3" cy="46.2" r="1.9"/><circle cx="403.1" cy="46.2" r="1.9"/><circle cx="409.9" cy="46.2" r="1.9"/><circle cx="416.7" cy="46.2" r="1.9"/><circle cx="423.5" cy="46.2" r="1.9"/><circle cx="430.2" cy="46.2" r="1.9"/><circle cx="437.0" cy="46.2" r="1.9"/><circle cx="443.8" cy="46.2" r="1.9"/><circle cx="450.6" cy="46.2" r="1.9"/><circle cx="457.4" cy="46.2" r="1.9"/><circle cx="464.2" cy="46.2" r="1.9"/><circle cx="471.0" cy="46.2" r="1.9"/><circle cx="477.8" cy="46.2" r="1.9"/><circle cx="484.6" cy="46.2" r="1.9"/><circle cx="491.4" cy="46.2" r="1.9"/><circle cx="498.2" cy="46.2" r="1.9"/><circle cx="505.0" cy="46.2" r="1.9"/><circle cx="511.8" cy="46.2" r="1.9"/><circle cx="518.6" cy="46.2" r="1.9"/><circle cx="525.4" cy="46.2" r="1.9"/><circle cx="532.2" cy="45.7" r="1.9"/><circle cx="539.0" cy="45.7" r="1.9"/><circle cx="545.8" cy="45.7" r="1.9"/><circle cx="552.6" cy="45.7" r="1.9"/><circle cx="559.4" cy="45.7" r="1.9"/><circle cx="566.2" cy="45.7" r="1.9"/><circle cx="573.0" cy="45.7" r="1.9"/><circle cx="579.8" cy="45.7" r="1.9"/><circle cx="586.6" cy="45.7" r="1.9"/><circle cx="593.4" cy="45.7" r="1.9"/><circle cx="600.1" cy="45.7" r="1.9"/><circle cx="606.9" cy="45.7" r="1.9"/><circle cx="613.7" cy="45.7" r="1.9"/><circle cx="620.5" cy="45.7" r="1.9"/><circle cx="627.3" cy="45.7" r="1.9"/><circle cx="634.1" cy="45.7" r="1.9"/><circle cx="640.9" cy="45.7" r="1.9"/><circle cx="647.7" cy="45.7" r="1.9"/><circle cx="654.5" cy="45.7" r="1.9"/><circle cx="661.3" cy="45.7" r="1.9"/><circle cx="668.1" cy="45.7" r="1.9"/><circle cx="674.9" cy="45.7" r="1.9"/><circle cx="681.7" cy="45.7" r="1.9"/><circle cx="688.5" cy="46.5" r="1.9"/><circle cx="695.3" cy="46.5" r="1.9"/><circle cx="702.1" cy="46.5" r="1.9"/><circle cx="708.9" cy="46.5" r="1.9"/><circle cx="715.7" cy="45.7" r="1.9"/><circle cx="722.5" cy="45.7" r="1.9"/><circle cx="729.3" cy="45.7" r="1.9"/><circle cx="736.1" cy="45.7" r="1.9"/><circle cx="742.9" cy="45.7" r="1.9"/></g>
<path d="M1 44.5 L5 47.6 L1 50.6 Z" fill="#66567a"/>
</svg>
<div class="a" style="left:295px;top:373px;width:13px;height:12px;background:#02f632"></div>
<svg class="a" style="left:295px;top:373px" width="13" height="12" viewBox="0 0 13 12"><path d="M7 1.7 Q2.6 0.9 1.5 2.8 Q1.2 4.8 4.6 5.2 M4.6 3.6 L10.6 8.2 M9.8 6 Q12.4 7.2 12 9.6 Q11.2 11.6 9.4 10.8 Q8 9.8 8.8 7.6" fill="none" stroke="#062a08" stroke-width="1.25" stroke-linecap="round"/></svg>
<div class="a" style="left:310px;top:373px;width:13px;height:12px;background:#3a9aa8"></div>
<svg class="a" style="left:310px;top:373px" width="13" height="12" viewBox="0 0 13 12"><rect x="5.9" y="2" width="2.1" height="1" fill="#cce8ec"/><path d="M4.6 5.1 H7.3 V9.4 M4.7 9.5 H8.9" fill="none" stroke="#cce8ec" stroke-width="1.6"/></svg>
<div class="a" style="left:326.5px;top:374px;font-size:10px;line-height:12px;color:#141414;white-space:nowrap;transform:scaleX(0.86);transform-origin:0 0">&lt;&lt;</div>
<div class="a" style="left:339px;top:374px;font-size:10px;line-height:12px;color:#141414;white-space:nowrap;transform:scaleX(1.06);transform-origin:0 0">25-s-230822_1314-glued.wav</div>
<div class="a" style="left:295px;top:608px;width:13px;height:12px;background:#02f632"></div>
<svg class="a" style="left:295px;top:608px" width="13" height="12" viewBox="0 0 13 12"><path d="M7 1.7 Q2.6 0.9 1.5 2.8 Q1.2 4.8 4.6 5.2 M4.6 3.6 L10.6 8.2 M9.8 6 Q12.4 7.2 12 9.6 Q11.2 11.6 9.4 10.8 Q8 9.8 8.8 7.6" fill="none" stroke="#062a08" stroke-width="1.25" stroke-linecap="round"/></svg>
<div class="a" style="left:310px;top:608px;width:13px;height:12px;background:#3a9aa8"></div>
<svg class="a" style="left:310px;top:608px" width="13" height="12" viewBox="0 0 13 12"><rect x="5.9" y="2" width="2.1" height="1" fill="#cce8ec"/><path d="M4.6 5.1 H7.3 V9.4 M4.7 9.5 H8.9" fill="none" stroke="#cce8ec" stroke-width="1.6"/></svg>
<div class="a" style="left:326.5px;top:609px;font-size:10px;line-height:12px;color:#141414;white-space:nowrap;transform:scaleX(0.86);transform-origin:0 0">&lt;&lt;</div>
<div class="a" style="left:339px;top:609px;font-size:10px;line-height:12px;color:#141414;white-space:nowrap;transform:scaleX(0.985);transform-origin:0 0">KS Resonance - stem</div>
<!-- /ARR -->
<!-- playhead -->
<div class="a" style="left:666px;top:222px;width:1px;height:504px;background:#5a1010"></div>

<!-- EXTRA -->
<!-- strip details -->
<div class="a" style="left:254px;top:371px;width:31px;height:1px;background:#3a3440"></div>
<div class="a" style="left:271px;top:371px;width:14px;height:1px;background:#3a3a3a"></div>
<div class="a" style="left:271px;top:606px;width:14px;height:1px;background:#3a3a3a"></div>
<svg class="a" style="left:257px;top:361px" width="10" height="9" viewBox="0 0 10 9"><path d="M1 1 H4.6 L5.8 2.6 H9 V8 H1 Z" fill="#a472dc"/></svg>
<svg class="a" style="left:257px;top:596px" width="10" height="9" viewBox="0 0 10 9"><path d="M1 1 H4.6 L5.8 2.6 H9 V8 H1 Z" fill="#a472dc"/></svg>
<div class="a" style="left:256px;top:482px;font-size:10px;line-height:12px;color:#111">27</div>
<div class="a" style="left:256px;top:711px;font-size:10px;line-height:12px;color:#111">28</div>
<svg class="a" style="left:249px;top:485px" width="8" height="8" viewBox="0 0 8 8"><circle cx="4.3" cy="3.8" r="2.7" fill="#cfd2d2" stroke="#3a3a3a" stroke-width="1"/></svg>
<!-- playhead triangle -->
<svg class="a" style="left:656px;top:212px" width="21" height="12" viewBox="0 0 21 12"><path d="M2.2 2.2 H18.8 L10.5 10.6 Z" fill="#4e1c1c" stroke="#fff" stroke-width="1.3" stroke-linejoin="miter"/></svg>
<!-- playhead flags in headers -->
<div class="a" style="left:666px;top:374px;width:4px;height:2px;background:#4a1010"></div>
<div class="a" style="left:666px;top:602px;width:4px;height:2px;background:#4a1010"></div>
<!-- right scrollbar controls -->
<svg class="a" style="left:1039px;top:266px" width="17" height="460" viewBox="0 0 17 460">
<circle cx="8.4" cy="8.4" r="5.6" fill="#1e1e1e"/><path d="M5.4 10.4 H11.4 L8.4 5.6 Z" fill="#8a8a8a"/>
<rect x="3" y="372" width="11" height="21" rx="5.5" fill="#555"/><rect x="5.6" y="381.6" width="5.6" height="1.8" fill="#1e1e1e"/>
<circle cx="8.4" cy="413.3" r="5.6" fill="#1e1e1e"/><path d="M5.4 411.2 H11.4 L8.4 416 Z" fill="#8a8a8a"/>
<path d="M4.4 430.4 H12.4 M8.4 426.4 V434.4" stroke="#777" stroke-width="2.2"/>
<path d="M4.4 441.3 H12.4" stroke="#222" stroke-width="1.2"/>
<path d="M4.4 451.5 H12.4" stroke="#777" stroke-width="2.2"/>
</svg>
<!-- horizontal scroll controls -->
<svg class="a" style="left:293px;top:727px" width="746" height="16" viewBox="0 0 746 16">
<circle cx="8.5" cy="7.5" r="5.6" fill="#1e1e1e"/><path d="M5.6 7.5 L10.6 4.6 V10.4 Z" fill="#6a6a6a"/>
<path d="M504.2 2 H516 L518 4.2 V10.6 L516 12.8 H504.2 L502.1 10.6 V4.2 Z" fill="#555"/><ellipse cx="505.9" cy="7.3" rx="1.7" ry="2.5" fill="#1e1e1e"/><ellipse cx="514.2" cy="7.3" rx="1.7" ry="2.5" fill="#1e1e1e"/><rect x="509.1" y="4" width="1.3" height="6.6" fill="#1e1e1e"/>
<circle cx="699.5" cy="7.3" r="5.6" fill="#1e1e1e"/><path d="M697.4 4.4 L702.6 7.3 L697.4 10.2 Z" fill="#777"/>
<path d="M712.5 7.3 H720.5 M716.5 3.3 V11.3" stroke="#777" stroke-width="2.2"/>
<path d="M727 3.5 V11" stroke="#222" stroke-width="1.2"/>
<path d="M733 7.3 H742" stroke="#777" stroke-width="2.2"/>
</svg>
<!-- /EXTRA -->
<!-- status -->
<div class="a" style="left:3px;top:729px;font-size:10px;line-height:12px;color:#c4c8d0;white-space:nowrap;transform:scaleX(1.05);transform-origin:0 0">25-s-230822_1314-glued.wav [resampled] 96k [rate] 1.0</div>
<div class="a" style="left:0;top:745px;width:1058px;height:1px;background:#282828"></div>
<!-- TRANSPORT -->
<div class="a" style="left:1px;top:781px;width:360px;height:35px;background:#2c2c2c"></div>
<div class="a" style="left:361px;top:781px;width:1px;height:35px;background:#333"></div>
<div class="a" style="left:362px;top:781px;width:50px;height:35px;background:#2c2c2c"></div>
<div class="a" style="left:412px;top:781px;width:1px;height:35px;background:#323232"></div>
<div class="a" style="left:413px;top:781px;width:38px;height:35px;background:#2c2c2c"></div>
<svg class="a" style="left:0;top:746px" width="300" height="35" viewBox="0 0 300 35">
<defs>
<linearGradient id="tdk" x1="0" y1="0" x2="0" y2="1"><stop offset="0" stop-color="#3c3c3c"/><stop offset="1" stop-color="#282828"/></linearGradient>
<linearGradient id="tpl" x1="0" y1="0" x2="0" y2="1"><stop offset="0" stop-color="#c9d1d1"/><stop offset="1" stop-color="#7f8a8a"/></linearGradient>
<linearGradient id="tpa" x1="0" y1="0" x2="0" y2="1"><stop offset="0" stop-color="#dde1e1"/><stop offset="1" stop-color="#a9afaf"/></linearGradient>
<linearGradient id="trc" x1="0" y1="0" x2="0" y2="1"><stop offset="0" stop-color="#7c4a3a"/><stop offset="1" stop-color="#5a2e20"/></linearGradient>
<clipPath id="tcp"><rect x="66.6" y="2" width="97.6" height="29" rx="14.5"/></clipPath>
</defs>
<!-- shadows -->
<rect x="6" y="6.5" width="55.6" height="24" rx="12" fill="#262626"/>
<rect x="67" y="4.5" width="97.6" height="29" rx="14.5" fill="#262626"/>
<circle cx="184.3" cy="18" r="15" fill="#262626"/>
<!-- prev/next -->
<rect x="5.7" y="4.4" width="55.6" height="24" rx="12" fill="url(#tdk)" stroke="#1c1c1c" stroke-width="1"/>
<path d="M33.6 4.4 V28.4" stroke="#1c1c1c" stroke-width="1"/>
<g fill="#8a8a8a"><rect x="15.9" y="11.5" width="1.9" height="9.5"/><path d="M18.4 16.2 L26.2 11.5 V21 Z"/><path d="M41.1 11.5 L48.2 16.2 L41.1 21 Z"/><rect x="48.5" y="11.5" width="2.3" height="9.5"/></g>
<!-- stop play pause -->
<g clip-path="url(#tcp)">
<rect x="66.6" y="2" width="31.2" height="29" fill="url(#tdk)"/>
<rect x="97.8" y="2" width="36.2" height="29" fill="url(#tpl)"/>
<rect x="134" y="2" width="30.2" height="29" fill="url(#tpa)"/>
<path d="M97.8 2 V31" stroke="#1e1e1e" stroke-width="0.8"/><path d="M134 2 V31" stroke="#3a3a3a" stroke-width="0.8"/>
</g>
<rect x="66.6" y="2" width="97.6" height="29" rx="14.5" fill="none" stroke="#1c1c1c" stroke-width="1"/>
<rect x="78.7" y="12.2" width="9.5" height="8.8" fill="#8a8a8a"/>
<path d="M112 11.5 L121.2 16.3 L112 21 Z" fill="#111"/>
<rect x="144.7" y="11.9" width="2.4" height="9.3" fill="#111"/><rect x="149.1" y="11.9" width="2.4" height="9.3" fill="#111"/>
<!-- record -->
<circle cx="184.3" cy="16.4" r="15" fill="#1e1e1e"/>
<circle cx="184.3" cy="16.4" r="14" fill="url(#trc)"/>
<circle cx="184.3" cy="16.4" r="6" fill="none" stroke="#c4a69e" stroke-width="3"/>
<!-- loop -->
<circle cx="216.5" cy="16.4" r="11.8" fill="#7cc0c4"/>
<path d="M211.2 15.2 A5.4 5.4 0 0 1 220.6 12.4" fill="none" stroke="#fff" stroke-width="1.8"/>
<path d="M221.8 17.6 A5.4 5.4 0 0 1 212.4 20.4" fill="none" stroke="#fff" stroke-width="1.8"/>
<path d="M222.8 10.4 V15.6 H217.6 Z" fill="#fff"/><path d="M210.2 22.4 V17.2 H215.4 Z" fill="#fff"/>
<!-- automation -->
<rect x="237" y="2" width="51" height="30.3" fill="#2c2c2c"/>
<rect x="238.5" y="17" width="48" height="14" fill="#2a2a2a"/>
<path d="M241.5 11.2 L245.6 6.6 L250.4 11.2" fill="none" stroke="#c8c8c8" stroke-width="1.2"/>
<rect x="240" y="10" width="2.6" height="2.6" fill="#c8c8c8"/><rect x="244.3" y="5.3" width="2.6" height="2.6" fill="#c8c8c8"/><rect x="249.2" y="10" width="2.6" height="2.6" fill="#c8c8c8"/>
<text x="254.6" y="12.2" font-family="Liberation Sans" font-size="8.6" font-weight="bold" fill="#c4c4c4" textLength="30.4" lengthAdjust="spacingAndGlyphs">GLOBAL</text>
<text x="241.6" y="26.3" font-family="Liberation Sans" font-size="10" fill="#a0a0a0">none</text>
<circle cx="278.4" cy="23.5" r="5.7" fill="none" stroke="#777" stroke-width="0.9"/><path d="M275.6 21.6 H281.2 L278.4 26 Z" fill="#777"/>
</svg>
<div class="a" style="left:11px;top:787px;font-size:24.5px;line-height:26px;font-weight:bold;color:#8e8e8e;white-space:nowrap;transform:scaleX(1.024);transform-origin:0 0" id="time">115.1.52 / 3:22.895</div>
<div class="a" style="left:277px;top:786px;font-size:18.5px;line-height:21px;color:#8c8c8c;white-space:nowrap;transform:scaleX(0.98);transform-origin:0 0" id="stopped">[Stopped]</div>
<div class="a" style="left:376px;top:784px;font-size:10px;line-height:12px;color:#aeaeae" id="bpm">BPM</div>
<div class="a" style="left:378px;top:801px;font-size:11px;line-height:12px;color:#aeaeae" id="b135">135</div>
<div class="a" style="left:422px;top:792px;font-size:12px;line-height:14px;color:#aeaeae" id="sig">4/4</div>
<div class="a" style="left:456px;top:785px;font-size:11px;line-height:13px;color:#9a9a9a" id="rate">Rate:</div>
<div class="a" style="left:530px;top:785px;font-size:11.5px;line-height:13px;color:#9a9a9a" id="r10">1.0</div>
<div class="a" style="left:452px;top:799px;width:140px;height:17px;background:#2a2a2a"></div>
<svg class="a" style="left:514px;top:800px" width="17" height="15" viewBox="0 0 17 15">
<defs><linearGradient id="thm" x1="0" y1="0" x2="1" y2="0"><stop offset="0" stop-color="#8a8a8a"/><stop offset="0.45" stop-color="#f0f0f0"/><stop offset="0.55" stop-color="#f0f0f0"/><stop offset="1" stop-color="#8a8a8a"/></linearGradient></defs>
<rect x="1" y="1" width="14.8" height="13.4" rx="2" fill="url(#thm)"/><rect x="7.6" y="1" width="1.6" height="13.4" fill="#2a2a2a"/>
</svg>
<div class="a" style="left:697px;top:756px;font-size:14.5px;line-height:16px;color:#a4a4a4" id="sel">Selection:</div>
<div class="a" style="left:786px;top:756px;font-size:14.5px;line-height:16px;color:#a4a4a4">13.1.00</div>
<div class="a" style="left:882px;top:756px;font-size:14.5px;line-height:16px;color:#a4a4a4">13.1.00</div>
<div class="a" style="left:981px;top:756px;font-size:14.5px;line-height:16px;color:#a4a4a4">0.0.00</div>
</body></html>
